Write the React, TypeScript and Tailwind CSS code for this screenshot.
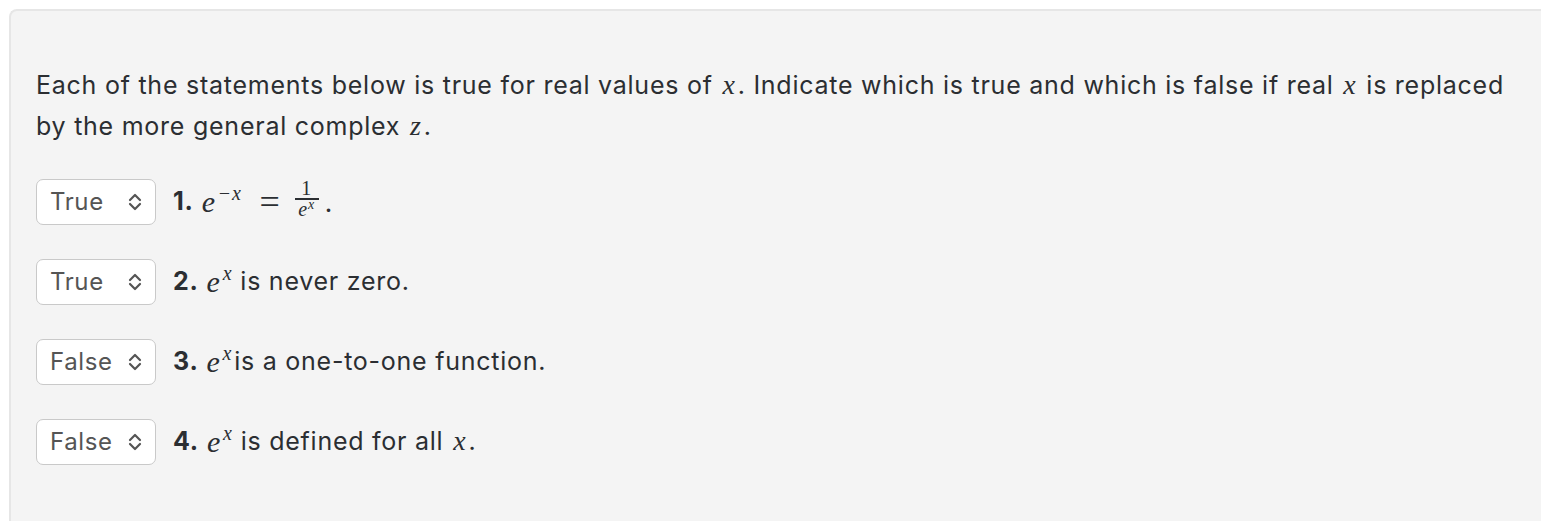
import type { ReactNode } from "react";

const MATH = "font-['Liberation_Serif',serif] italic";

function M({ children }: { children: ReactNode }) {
  return <span className={`${MATH} text-[28px] leading-none mx-[2px]`}>{children}</span>;
}

function Ex({ sup = "x" }: { sup?: string }) {
  return (
    <span className={`${MATH} text-[30px] leading-none`}>
      e<sup className="text-[20px] relative -top-[12px] ml-[2px] align-baseline">{sup}</sup>
    </span>
  );
}

function Chevrons() {
  return (
    <svg width="16" height="20" viewBox="0 0 16 20" fill="none" className="shrink-0">
      <path d="M3 8 L8 3 L13 8" stroke="#555" strokeWidth="2.2" strokeLinecap="round" strokeLinejoin="round" />
      <path d="M3 12 L8 17 L13 12" stroke="#555" strokeWidth="2.2" strokeLinecap="round" strokeLinejoin="round" />
    </svg>
  );
}

function Select({ value }: { value: string }) {
  return (
    <div className="w-[120px] h-[46px] shrink-0 flex items-center justify-between pl-[13px] pr-[12px] bg-white border border-[#c9c9c9] rounded-[7px] text-[24px] tracking-[0.6px] text-[#555]">
      <span>{value}</span>
      <Chevrons />
    </div>
  );
}

function Row({ value, n, children }: { value: string; n: number; children: ReactNode }) {
  return (
    <div className="flex items-center h-[46px]">
      <Select value={value} />
      <div className="ml-[17px] flex items-center">
        <span className="font-bold mr-[8px]">{n}.</span>
        {children}
      </div>
    </div>
  );
}

export default function App() {
  return (
    <div className="h-[521px] bg-white overflow-hidden pt-[9px] pl-[9px] font-['Inter',sans-serif] text-[25px] tracking-[0.75px] text-[#2b2e32]">
      <div className="h-[560px] bg-[#f4f4f4] rounded-tl-[8px] border-l-2 border-t-2 border-[#e6e6e6] pl-[25px] pt-[54px]">
        <p className="leading-[41px] max-w-[1480px]">
          Each of the statements below is true for real values of <M>x</M>. Indicate which is true and which is false if real <M>x</M> is replaced by the more general complex <M>z</M>.
        </p>

        <div className="mt-[32px] flex flex-col gap-[34px]">
          <Row value="True" n={1}>
            <Ex sup="−x" />
            <span className="font-['Liberation_Serif',serif] text-[36px] leading-none ml-[18px] mr-[14px]">=</span>
            <span className="inline-flex flex-col items-center leading-none relative -top-[3px]">
              <span className="font-['Liberation_Serif',serif] text-[20px] leading-[19px]">1</span>
              <span className="w-[24px] h-[1.5px] bg-[#2b2e32]" />
              <span className={`${MATH} text-[20px] leading-[19px]`}>
                e<sup className="text-[14px] relative -top-[7px] align-baseline">x</sup>
              </span>
            </span>
            <span className="font-['Liberation_Serif',serif] text-[30px] leading-none ml-[6px]">.</span>
          </Row>
          <Row value="True" n={2}>
            <Ex />
            <span className="ml-[8px]">is never zero.</span>
          </Row>
          <Row value="False" n={3}>
            <Ex />
            <span className="ml-[2px]">is a one-to-one function.</span>
          </Row>
          <Row value="False" n={4}>
            <Ex />
            <span className="ml-[8px]">is defined for all <M>x</M>.</span>
          </Row>
        </div>
      </div>
    </div>
  );
}
